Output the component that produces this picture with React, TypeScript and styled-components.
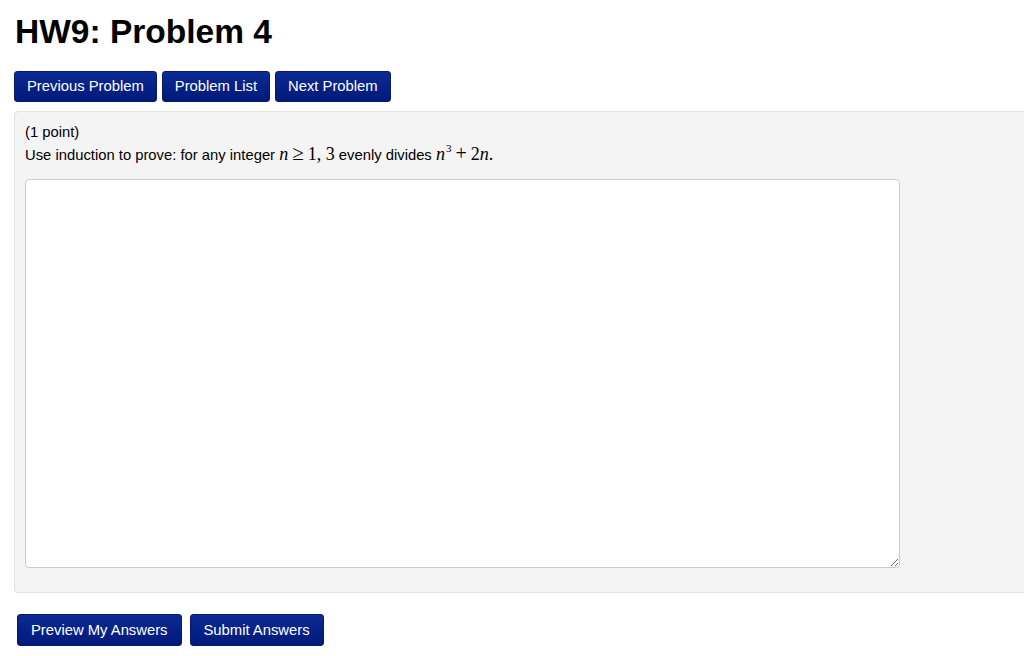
import React from "react";
import styled, { createGlobalStyle } from "styled-components";

const GlobalStyle = createGlobalStyle`
  html, body {
    margin: 0;
    padding: 0;
    background: #ffffff;
    overflow: hidden;
  }
  body {
    font-family: "Liberation Sans", Arial, sans-serif;
    color: #000000;
  }
`;

const Page = styled.div`
  width: 1024px;
  height: 656px;
  padding: 0 0 0 14px;
  box-sizing: border-box;
`;

const Title = styled.h1`
  margin: 0;
  padding: 13px 0 0 1px;
  font-size: 33.5px;
  line-height: 38px;
  font-weight: 700;
`;

const NavBar = styled.div`
  display: flex;
  gap: 5px;
  margin-top: 20px;
`;

const Button = styled.button<{ $height?: number; $pad?: number }>`
  height: ${({ $height }) => $height ?? 31}px;
  padding: 0 ${({ $pad }) => $pad ?? 13}px;
  border: 1px solid #0a1a6a;
  border-radius: 3px;
  background: linear-gradient(#0c2a94, #001a7a);
  color: #ffffff;
  font-family: "Liberation Sans", Arial, sans-serif;
  font-size: 14.8px;
  line-height: 1;
  cursor: pointer;
`;

const ProblemPanel = styled.div`
  margin-top: 9px;
  width: 1030px;
  height: 482px;
  box-sizing: border-box;
  background: #f4f4f4;
  border: 1px solid #e2e2e2;
  border-radius: 4px;
  padding: 9px 10px 0 10px;
  font-size: 14.8px;
`;

const Line = styled.div`
  height: 22px;
  line-height: 22px;
`;

const Math = styled.span`
  font-family: "Liberation Serif", "Times New Roman", serif;
  font-size: 18px;
  line-height: 1;
`;

const Var = styled.i`
  font-style: italic;
`;

const Rel = styled.span<{ $size?: number }>`
  margin: 0 4px;
  font-size: ${({ $size }) => $size ?? 18}px;
  line-height: 1;
`;

const Sup = styled.sup`
  font-size: 11px;
  vertical-align: 8px;
  line-height: 0;
  margin-left: 1px;
`;

const AnswerBox = styled.textarea`
  display: block;
  margin-top: 14px;
  width: 875px;
  height: 389px;
  box-sizing: border-box;
  background: #ffffff;
  border: 1px solid #cccccc;
  border-radius: 4px;
  resize: both;
  padding: 6px;
  font-family: "Liberation Sans", Arial, sans-serif;
  font-size: 13px;
`;

const SubmitBar = styled.div`
  display: flex;
  gap: 8px;
  margin-top: 21px;
  padding-left: 3px;
`;

export default function App() {
  return (
    <>
      <GlobalStyle />
      <Page>
        <Title>HW9: Problem 4</Title>
        <NavBar>
          <Button $pad={12}>Previous Problem</Button>
          <Button $pad={12}>Problem List</Button>
          <Button $pad={12}>Next Problem</Button>
        </NavBar>
        <ProblemPanel>
          <Line>(1 point)</Line>
          <Line>
            Use induction to prove: for any integer{" "}
            <Math>
              <Var>n</Var>
              <Rel $size={21}>≥</Rel>1, 3
            </Math>{" "}
            evenly divides{" "}
            <Math>
              <Var>n</Var>
              <Sup>3</Sup>
              <Rel $size={20}>+</Rel>2<Var>n</Var>.
            </Math>
          </Line>
          <AnswerBox />
        </ProblemPanel>
        <SubmitBar>
          <Button $height={32} $pad={13}>Preview My Answers</Button>
          <Button $height={32} $pad={13}>Submit Answers</Button>
        </SubmitBar>
      </Page>
    </>
  );
}
